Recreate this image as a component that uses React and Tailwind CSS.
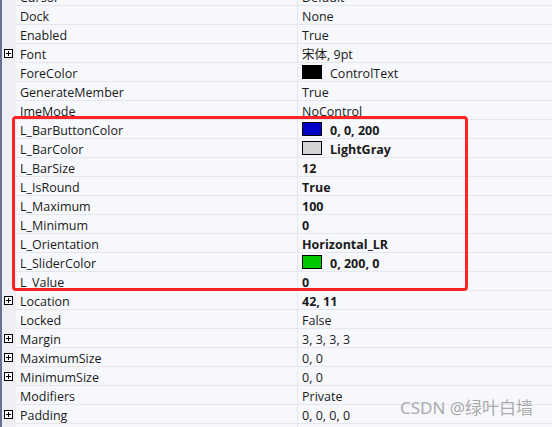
import React from "react";

const rows = [
  { name: "Cursor", value: "Default" },
  { name: "Dock", value: "None" },
  { name: "Enabled", value: "True" },
  { name: "Font", value: "宋体, 9pt", plus: true },
  { name: "ForeColor", value: "ControlText", swatch: "#000000" },
  { name: "GenerateMember", value: "True" },
  { name: "ImeMode", value: "NoControl" },
  { name: "L_BarButtonColor", value: "0, 0, 200", swatch: "#0000c8", bold: true },
  { name: "L_BarColor", value: "LightGray", swatch: "#d3d3d3", bold: true },
  { name: "L_BarSize", value: "12", bold: true },
  { name: "L_IsRound", value: "True", bold: true },
  { name: "L_Maximum", value: "100", bold: true },
  { name: "L_Minimum", value: "0", bold: true },
  { name: "L_Orientation", value: "Horizontal_LR", bold: true },
  { name: "L_SliderColor", value: "0, 200, 0", swatch: "#00c800", bold: true },
  { name: "L_Value", value: "0", bold: true },
  { name: "Location", value: "42, 11", plus: true, bold: true },
  { name: "Locked", value: "False" },
  { name: "Margin", value: "3, 3, 3, 3", plus: true },
  { name: "MaximumSize", value: "0, 0", plus: true },
  { name: "MinimumSize", value: "0, 0", plus: true },
  { name: "Modifiers", value: "Private" },
  { name: "Padding", value: "0, 0, 0, 0", plus: true },
  { name: "", value: "" },
];

function Plus() {
  return (
    <svg width="9" height="9" viewBox="0 0 9 9" className="block">
      <rect x="0.5" y="0.5" width="8" height="8" fill="#ffffff" stroke="#000000" strokeWidth="1" />
      <line x1="2" y1="4.5" x2="7" y2="4.5" stroke="#000000" strokeWidth="1" />
      <line x1="4.5" y1="2" x2="4.5" y2="7" stroke="#000000" strokeWidth="1" />
    </svg>
  );
}

export default function App() {
  return (
    <div
      className="relative w-[552px] h-[427px] overflow-hidden bg-[#f7f8fc] text-[12.5px] text-[#1a1a1a]"
      style={{ fontFamily: '"Open Sans", "Noto Sans CJK SC", sans-serif' }}
    >
      <div className="flex -mt-[13px]">
        <div className="w-[16px] shrink-0 border-l-2 border-[#6b6f96] bg-[#eeeff4] flex flex-col">
          {rows.map((r, i) => (
            <div key={i} className="h-[19px] flex items-center pl-[2px]">
              {r.plus ? <Plus /> : null}
            </div>
          ))}
        </div>
        <div className="flex-1 flex flex-col">
          {rows.map((r, i) => (
            <div key={i} className="h-[19px] flex border-b border-[#e6e7ee]">
              <div className="w-[282px] shrink-0 pl-[4px] pt-[5px] flex items-center border-r border-[#e6e7ee] leading-none">
                {r.name}
              </div>
              <div className={`flex-1 flex items-center pl-[4px] leading-none ${r.bold ? "font-bold" : ""}`}>
                {r.swatch ? (
                  <span
                    className="w-[20px] h-[14px] border border-black mr-[8px] shrink-0"
                    style={{ backgroundColor: r.swatch }}
                  />
                ) : null}
                <span className="pt-[5px]">{r.value}</span>
              </div>
            </div>
          ))}
        </div>
      </div>
      <div className="absolute left-[12px] top-[116px] w-[456px] h-[175px] border-[3px] border-[#ff2323] rounded-[4px]" />
      <div
        className="absolute left-[400px] top-[396px] text-[17px] leading-[24px] text-[#ababab]"
        style={{ fontFamily: '"Noto Sans", "Noto Sans CJK SC", sans-serif' }}
      >
        CSDN @绿叶白墙
      </div>
    </div>
  );
}
